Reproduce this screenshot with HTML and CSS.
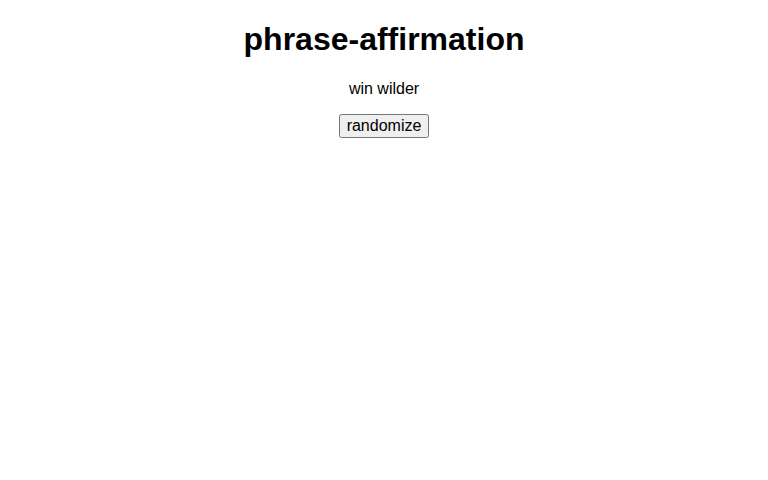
FILE: index.html
```html
<!DOCTYPE html>
<html lang="en">
<head>
  <meta charset="UTF-8" />
  <meta name="viewport" content="width=device-width, initial-scale=1.0" />
  <title>phrase-affirmation</title>
  <link rel="stylesheet" href="styles.css">
</head>
<body>
  <div class="app">
    <h1 class="title">phrase-affirmation</h1>
    <p class="phrase" id="phrase">win wilder</p>
    <button class="randomize" id="randomize">randomize</button>
  </div>

  <script>
    const verbs = ['win', 'dream', 'grow', 'love', 'run', 'shine'];
    const adverbs = ['wilder', 'bigger', 'brighter', 'bolder', 'louder', 'freer'];
    const phrase = document.getElementById('phrase');

    function pick(list) {
      return list[Math.floor(Math.random() * list.length)];
    }

    // New phrase on each click
    document.getElementById('randomize').addEventListener('click', () => {
      phrase.textContent = pick(verbs) + ' ' + pick(adverbs);
    });
  </script>
</body>
</html>
```

FILE: styles.css
```css
body {
  margin: 0;
  font-family: "Liberation Sans", Arial, sans-serif;
  background: #fff;
  color: #000;
}

.app {
  text-align: center;
}

.title {
  font-size: 32px;
  margin: 21.44px 0;
}

.phrase {
  font-size: 16px;
  margin: 16px 0;
}

.randomize {
  font-family: inherit;
  font-size: 16px;
}
```
